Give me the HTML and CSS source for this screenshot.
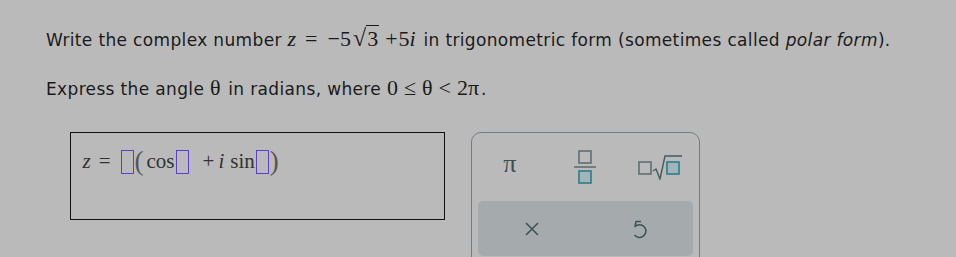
FILE: index.html
```html
<!DOCTYPE html>
<html>
<head>
  <title>Trigonometric form</title>
  <link rel="stylesheet" href="styles.css">
</head>
<body>
  <div class="page">
    <p class="prompt">Write the complex number <span class="math"><i>z</i><span class="eq">=</span>&minus;5<span class="root"><span class="radical">&radic;</span><span class="radicand">3</span></span><span class="plus">+</span>5<i>i</i></span> in trigonometric form (sometimes called <em>polar form</em>).</p>
    <p class="prompt">Express the angle <span class="math">&theta;</span> in radians, where <span class="math">0<span class="rel">&le;</span>&theta;<span class="rel">&lt;</span>2&pi;</span>.</p>

    <div class="work">
      <div class="answer">
        <div class="expr">
          <i class="var">z</i>
          <span class="equals">=</span>
          <span class="slot"></span>
          <span class="paren">(</span>
          <span class="fn">cos</span>
          <span class="slot"></span>
          <span class="bin">+</span>
          <i class="imag">i</i>
          <span class="fn">sin</span>
          <span class="slot"></span>
          <span class="paren">)</span>
        </div>
      </div>

      <div class="keypad">
        <div class="keys">
          <div class="key pi">&pi;</div>
          <div class="key">
            <svg width="22" height="34" viewBox="0 0 22 34">
              <rect x="5" y="1" width="12" height="12" fill="none" stroke="#5f6e73" stroke-width="1.6"/>
              <line x1="0" y1="17" x2="22" y2="17" stroke="#5f6e73" stroke-width="1.6"/>
              <rect x="5" y="21" width="12" height="12" fill="#9fb7bc" stroke="#2f7b8a" stroke-width="1.6"/>
            </svg>
          </div>
          <div class="key sqrt">
            <svg width="44" height="26" viewBox="0 0 44 26">
              <rect x="1" y="8" width="12" height="12" fill="none" stroke="#5f6e73" stroke-width="1.6"/>
              <path d="M15 17 L18 15 L22 25 L27 2 L44 2" fill="none" stroke="#46595f" stroke-width="1.4"/>
              <rect x="29" y="8" width="12" height="12" fill="#9fb7bc" stroke="#2f7b8a" stroke-width="1.6"/>
            </svg>
          </div>
        </div>
        <div class="actions">
          <div class="key">
            <svg width="16" height="16" viewBox="0 0 16 16">
              <path d="M2 2 L14 14 M14 2 L2 14" stroke="#3f5459" stroke-width="1.6" fill="none"/>
            </svg>
          </div>
          <div class="key">
            <svg width="16" height="20" viewBox="0 0 16 20">
              <path d="M10 2.5 H5 L4 7.5 A6.4 6.4 0 1 1 3.5 16" fill="none" stroke="#3f5459" stroke-width="1.5" stroke-linejoin="round"/>
            </svg>
          </div>
        </div>
      </div>
    </div>
  </div>
</body>
</html>
```

FILE: styles.css
```css
body {
  margin: 0;
  background-color: #bababa;
  font-family: "DejaVu Sans", Verdana, sans-serif;
  color: #1a1a1a;
}
.page {
  padding: 26px 46px 0 46px;
}
.prompt {
  margin: 0 0 21px 0;
  font-size: 17px;
  line-height: 28px;
  height: 28px;
  letter-spacing: 0.35px;
  white-space: nowrap;
}
.prompt em {
  font-style: italic;
}
.math {
  font-family: "Liberation Serif", "Times New Roman", serif;
  font-size: 22px;
  line-height: 1;
  letter-spacing: 0;
  margin-right: 2px;
}
.eq {
  margin: 0 10px 0 9px;
}
.plus {
  margin: 0 1px 0 6px;
}
.rel {
  margin: 0 6px;
}
.root {
  display: inline-block;
  margin-left: 2px;
}
.radical {
  font-size: 24px;
}
.radicand {
  border-top: 1px solid #1a1a1a;
  padding: 0 1px;
}
.work {
  display: flex;
  align-items: flex-start;
  margin-top: 29px;
}
.answer {
  width: 375px;
  height: 88px;
  margin-left: 24px;
  border: 1.5px solid #111;
  padding: 13px 0 0 11.5px;
  box-sizing: border-box;
}
.expr {
  display: flex;
  align-items: center;
  font-family: "Liberation Serif", "Times New Roman", serif;
  font-size: 21px;
  color: #333;
}
.equals {
  margin: 0 10px 0 8px;
}
.slot {
  width: 11px;
  height: 22px;
  border: 1.5px solid #5b3fd4;
}
.paren {
  font-size: 27px;
  color: #555;
  margin: 0 1px;
}
.fn {
  margin: 0 1px 0 2px;
}
.bin {
  margin: 0 4px 0 14px;
}
.imag {
  margin-right: 4px;
}
.keypad {
  margin-left: 26px;
  width: 229px;
  height: 140px;
  border: 1.5px solid #6d7f86;
  border-radius: 10px;
  padding: 6px 6px 0 6px;
  box-sizing: border-box;
}
.keys {
  display: grid;
  grid-template-columns: 1fr 1fr 1fr;
  height: 56px;
  align-items: center;
  margin: 0 -6px;
}
.actions {
  display: grid;
  grid-template-columns: 1fr 1fr;
  align-items: center;
  height: 55px;
  margin-top: 6px;
  background-color: #a5aaad;
  border-radius: 5px;
}
.key {
  display: flex;
  justify-content: center;
  align-items: center;
}
.pi {
  font-family: "Liberation Serif", serif;
  font-size: 26px;
  color: #3a4f55;
  margin-top: -6px;
}
.sqrt {
  margin-left: -3px;
}
```
